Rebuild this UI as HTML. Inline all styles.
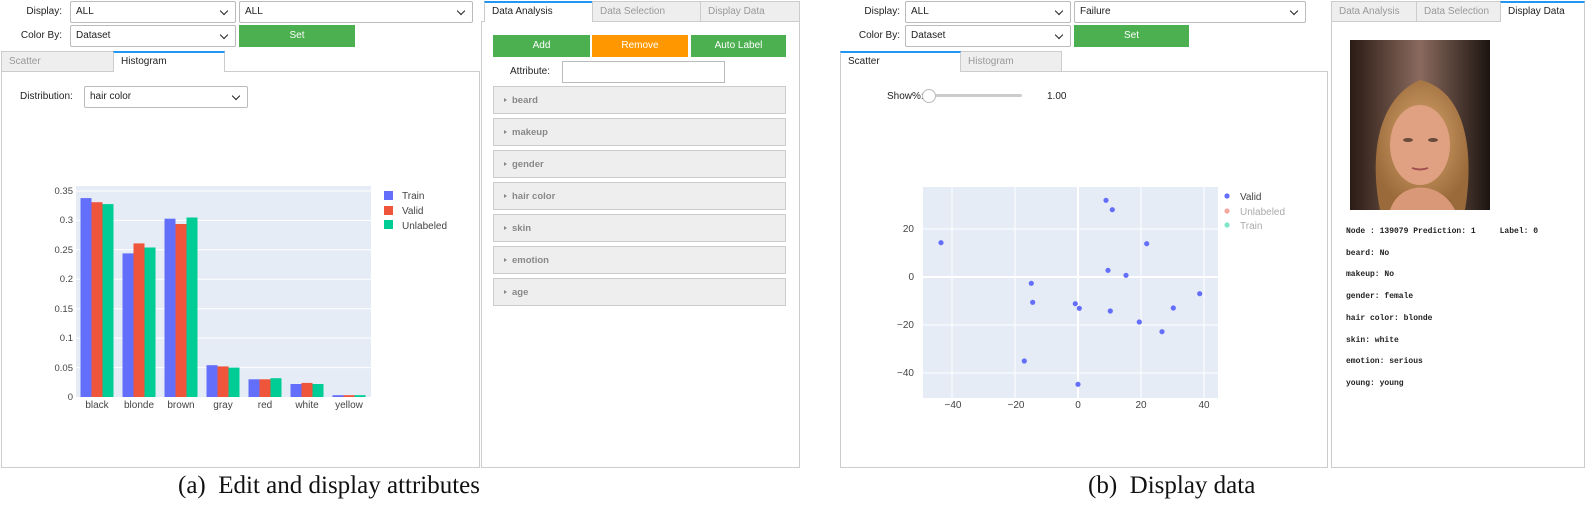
<!DOCTYPE html>
<html><head><meta charset="utf-8"><style>
*{box-sizing:border-box;margin:0;padding:0}
body{width:1585px;height:510px;background:#fff;position:relative;overflow:hidden;font-family:"Liberation Sans",Arial,sans-serif;font-size:10px;color:#222}
.a{position:absolute}
.sel{position:absolute;border:1px solid #bbb;border-radius:2px;background:#fff;font-size:10px;line-height:20px;padding:0 0 0 5px;color:#222}
.sel:after{content:"";position:absolute;right:8px;top:6px;width:5px;height:5px;border-right:1.5px solid #222;border-bottom:1.5px solid #222;transform:rotate(45deg)}
.lbl{position:absolute;font-size:10px;text-align:right}
.btn{position:absolute;color:#fff;font-size:10px;text-align:center;line-height:21px;background:#4caf50}
.tab{position:absolute;height:21px;border:1px solid #ccc;background:#eee;color:#999;font-size:10px;padding:4px 0 0 7px}
.tab.on{background:#fff;color:#222;border-top:2px solid #2196f3;border-bottom:none;padding-top:3px}
.panel{position:absolute;border:1px solid #ccc;background:#fff}
.acc{position:absolute;left:493px;width:293px;height:28px;background:#eee;border:1px solid #ccc;color:#888;font-weight:bold;font-size:9.5px;padding:8px 0 0 10px}
.acc:before{content:"";display:inline-block;border-left:3px solid #888;border-top:2.5px solid transparent;border-bottom:2.5px solid transparent;margin-right:5px;vertical-align:1px}
.mono{position:absolute;left:1346px;font-family:"Liberation Mono",monospace;font-weight:bold;font-size:8px;color:#222}
.cap{position:absolute;top:472px;font-family:"Liberation Serif",serif;font-size:25px;color:#111}
</style></head><body>

<div class="lbl" style="left:0;width:62px;top:6px">Display:</div>
<div class="sel" style="left:70px;top:1px;width:166px;height:22px">ALL</div>
<div class="sel" style="left:239px;top:1px;width:234px;height:22px">ALL</div>
<div class="lbl" style="left:0;width:62px;top:30px">Color By:</div>
<div class="sel" style="left:70px;top:25px;width:166px;height:22px">Dataset</div>
<div class="btn" style="left:239px;top:25px;width:116px;height:22px">Set</div>
<div class="panel" style="left:1px;top:71px;width:479px;height:397px"></div>
<div class="tab" style="left:1px;top:51px;width:113px;color:#999">Scatter</div>
<div class="tab on" style="left:113px;top:51px;width:112px;height:21px">Histogram</div>
<div class="lbl" style="left:20px;top:91px;text-align:left">Distribution:</div>
<div class="sel" style="left:84px;top:86px;width:164px;height:22px">hair color</div>

<svg class="a" style="left:0;top:0" width="480" height="470" font-family="Liberation Sans, sans-serif">
<rect x="76" y="186" width="295" height="211" fill="#e5ecf6"/>
<g stroke="#fff" stroke-width="1">
<line x1="76" x2="371" y1="367.6" y2="367.6"/><line x1="76" x2="371" y1="338.1" y2="338.1"/><line x1="76" x2="371" y1="308.7" y2="308.7"/><line x1="76" x2="371" y1="279.3" y2="279.3"/><line x1="76" x2="371" y1="249.8" y2="249.8"/><line x1="76" x2="371" y1="220.4" y2="220.4"/><line x1="76" x2="371" y1="191" y2="191"/>
</g>
<g fill="#636efa"><rect x="80.5" y="198.1" width="11" height="198.9"/><rect x="122.5" y="253.4" width="11" height="143.6"/><rect x="164.5" y="218.7" width="11" height="178.3"/><rect x="206.5" y="365.2" width="11" height="31.8"/><rect x="248.5" y="379.3" width="11" height="17.7"/><rect x="290.5" y="384" width="11" height="13"/><rect x="332.5" y="395.2" width="11" height="1.8"/></g>
<g fill="#ef553b"><rect x="91.5" y="202.2" width="11" height="194.8"/><rect x="133.5" y="243.4" width="11" height="153.6"/><rect x="175.5" y="224" width="11" height="173"/><rect x="217.5" y="366.4" width="11" height="30.6"/><rect x="259.5" y="379.3" width="11" height="17.7"/><rect x="301.5" y="382.9" width="11" height="14.1"/><rect x="343.5" y="395.2" width="11" height="1.8"/></g>
<g fill="#00cc96"><rect x="102.5" y="204.1" width="11" height="192.9"/><rect x="144.5" y="247.5" width="11" height="149.5"/><rect x="186.5" y="217.5" width="11" height="179.5"/><rect x="228.5" y="367.6" width="11" height="29.4"/><rect x="270.5" y="378.2" width="11" height="18.8"/><rect x="312.5" y="384" width="11" height="13"/><rect x="354.5" y="395.2" width="11" height="1.8"/></g>
<g fill="#444" font-size="9.5" text-anchor="end">
<text x="73" y="194">0.35</text><text x="73" y="223">0.3</text><text x="73" y="253">0.25</text><text x="73" y="282">0.2</text><text x="73" y="312">0.15</text><text x="73" y="341">0.1</text><text x="73" y="371">0.05</text><text x="73" y="400">0</text></g>
<g fill="#444" font-size="10" text-anchor="middle">
<text x="97" y="408">black</text><text x="139" y="408">blonde</text><text x="181" y="408">brown</text><text x="223" y="408">gray</text><text x="265" y="408">red</text><text x="307" y="408">white</text><text x="349" y="408">yellow</text></g>
<rect x="384" y="191" width="9" height="9" fill="#636efa"/><rect x="384" y="206" width="9" height="9" fill="#ef553b"/><rect x="384" y="220" width="9" height="9" fill="#00cc96"/>
<g fill="#444" font-size="10"><text x="402" y="199">Train</text><text x="402" y="214">Valid</text><text x="402" y="229">Unlabeled</text></g>
</svg>

<div class="panel" style="left:481px;top:21px;width:319px;height:447px"></div>
<div class="tab on" style="left:484px;top:1px;width:109px;height:21px">Data Analysis</div>
<div class="tab" style="left:592px;top:1px;width:109px">Data Selection</div>
<div class="tab" style="left:700px;top:1px;width:100px">Display Data</div>
<div class="btn" style="left:493px;top:35px;width:97px;height:22px">Add</div>
<div class="btn" style="left:592px;top:35px;width:96px;height:22px;background:#ff9800">Remove</div>
<div class="btn" style="left:691px;top:35px;width:95px;height:22px">Auto Label</div>
<div class="lbl" style="left:510px;top:66px">Attribute:</div>
<div class="a" style="left:562px;top:61px;width:163px;height:22px;border:1px solid #bbb"></div>
<div class="acc" style="top:86px">beard</div>
<div class="acc" style="top:118px">makeup</div>
<div class="acc" style="top:150px">gender</div>
<div class="acc" style="top:182px">hair color</div>
<div class="acc" style="top:214px">skin</div>
<div class="acc" style="top:246px">emotion</div>
<div class="acc" style="top:278px">age</div>

<div class="lbl" style="left:840px;width:60px;top:6px">Display:</div>
<div class="sel" style="left:905px;top:1px;width:166px;height:22px">ALL</div>
<div class="sel" style="left:1074px;top:1px;width:232px;height:22px">Failure</div>
<div class="lbl" style="left:840px;width:60px;top:30px">Color By:</div>
<div class="sel" style="left:905px;top:25px;width:166px;height:22px">Dataset</div>
<div class="btn" style="left:1074px;top:25px;width:115px;height:22px">Set</div>
<div class="panel" style="left:840px;top:71px;width:488px;height:397px"></div>
<div class="tab" style="left:960px;top:51px;width:102px">Histogram</div>
<div class="tab on" style="left:840px;top:51px;width:121px;height:21px">Scatter</div>
<div class="lbl" style="left:887px;top:91px;text-align:left">Show%:</div>
<div class="a" style="left:930px;top:94px;width:92px;height:3px;background:#ccc;border-radius:2px"></div>
<div class="a" style="left:922px;top:89px;width:14px;height:14px;border-radius:50%;border:1px solid #bbb;background:#fff"></div>
<div class="lbl" style="left:1047px;top:91px;text-align:left">1.00</div>
<svg class="a" style="left:840px;top:0" width="487" height="470" font-family="Liberation Sans, sans-serif">
<rect x="83" y="187" width="295" height="211" fill="#e5ecf6"/>
<g stroke="#fff"><line x1="112" x2="112" y1="187" y2="398"/><line x1="175" x2="175" y1="187" y2="398"/><line x1="301" x2="301" y1="187" y2="398"/><line x1="364" x2="364" y1="187" y2="398"/>
<line x1="83" x2="378" y1="229" y2="229"/><line x1="83" x2="378" y1="325" y2="325"/><line x1="83" x2="378" y1="373" y2="373"/>
<line x1="238" x2="238" y1="187" y2="398" stroke-width="2"/><line x1="83" x2="378" y1="277" y2="277" stroke-width="2"/></g>
<g fill="#636efa">
<circle cx="101" cy="242.7" r="2.6"/><circle cx="266" cy="200.3" r="2.6"/><circle cx="272.3" cy="209.7" r="2.6"/><circle cx="306.7" cy="243.7" r="2.6"/><circle cx="268" cy="270.3" r="2.6"/><circle cx="286" cy="275.3" r="2.6"/><circle cx="191.3" cy="283.3" r="2.6"/><circle cx="192.7" cy="302.3" r="2.6"/><circle cx="235.3" cy="303.7" r="2.6"/><circle cx="239.3" cy="308.3" r="2.6"/><circle cx="270.3" cy="311" r="2.6"/><circle cx="299.3" cy="322" r="2.6"/><circle cx="322" cy="331.7" r="2.6"/><circle cx="333.3" cy="308" r="2.6"/><circle cx="359.7" cy="293.7" r="2.6"/><circle cx="184.3" cy="361" r="2.6"/><circle cx="238" cy="384.3" r="2.6"/></g>
<g fill="#444" font-size="10" text-anchor="end"><text x="74" y="232">20</text><text x="74" y="280">0</text><text x="74" y="328">−20</text><text x="74" y="376">−40</text></g>
<g fill="#444" font-size="10" text-anchor="middle"><text x="113" y="408">−40</text><text x="176" y="408">−20</text><text x="238" y="408">0</text><text x="301" y="408">20</text><text x="364" y="408">40</text></g>
<circle cx="387" cy="196" r="2.6" fill="#636efa"/><circle cx="387" cy="211" r="2.6" fill="#f4a9a0"/><circle cx="387" cy="225" r="2.6" fill="#7fe6c9"/>
<g font-size="10"><text x="400" y="200" fill="#444">Valid</text><text x="400" y="215" fill="#aaa">Unlabeled</text><text x="400" y="229" fill="#aaa">Train</text></g>
</svg>

<div class="panel" style="left:1331px;top:21px;width:254px;height:447px"></div>
<div class="tab" style="left:1331px;top:1px;width:86px">Data Analysis</div>
<div class="tab" style="left:1416px;top:1px;width:85px">Data Selection</div>
<div class="tab on" style="left:1500px;top:1px;width:85px;height:21px">Display Data</div>
<svg class="a" style="left:1350px;top:40px" width="140" height="170">
<defs><linearGradient id="bg" x1="0" x2="1"><stop offset="0" stop-color="#2a1b14"/><stop offset=".5" stop-color="#8a6a5e"/><stop offset="1" stop-color="#1c1410"/></linearGradient>
<radialGradient id="hair" cx=".5" cy=".45" r=".55"><stop offset="0" stop-color="#d9a870"/><stop offset="1" stop-color="#9a6a3a"/></radialGradient></defs>
<rect width="140" height="170" fill="url(#bg)"/>
<path d="M30 170 C20 120 25 60 70 40 C115 50 125 110 115 170Z" fill="url(#hair)"/>
<ellipse cx="70" cy="105" rx="30" ry="40" fill="#e0a182"/>
<path d="M40 170 C50 140 90 140 105 170Z" fill="#d99878"/>
<ellipse cx="58" cy="100" rx="5" ry="2" fill="#6a4a3a"/><ellipse cx="83" cy="100" rx="5" ry="2" fill="#6a4a3a"/>
<path d="M62 128 Q70 131 78 128" stroke="#a05050" stroke-width="2" fill="none"/>
</svg>
<div class="mono" style="top:227px;white-space:pre">Node : 139079 Prediction: 1     Label: 0</div>
<div class="mono" style="top:249px">beard: No</div>
<div class="mono" style="top:270px">makeup: No</div>
<div class="mono" style="top:292px">gender: female</div>
<div class="mono" style="top:314px">hair color: blonde</div>
<div class="mono" style="top:336px">skin: white</div>
<div class="mono" style="top:357px">emotion: serious</div>
<div class="mono" style="top:379px">young: young</div>

<div class="cap" style="left:178px">(a)&nbsp; Edit and display attributes</div>
<div class="cap" style="left:1088px">(b)&nbsp; Display data</div>
</body></html>
